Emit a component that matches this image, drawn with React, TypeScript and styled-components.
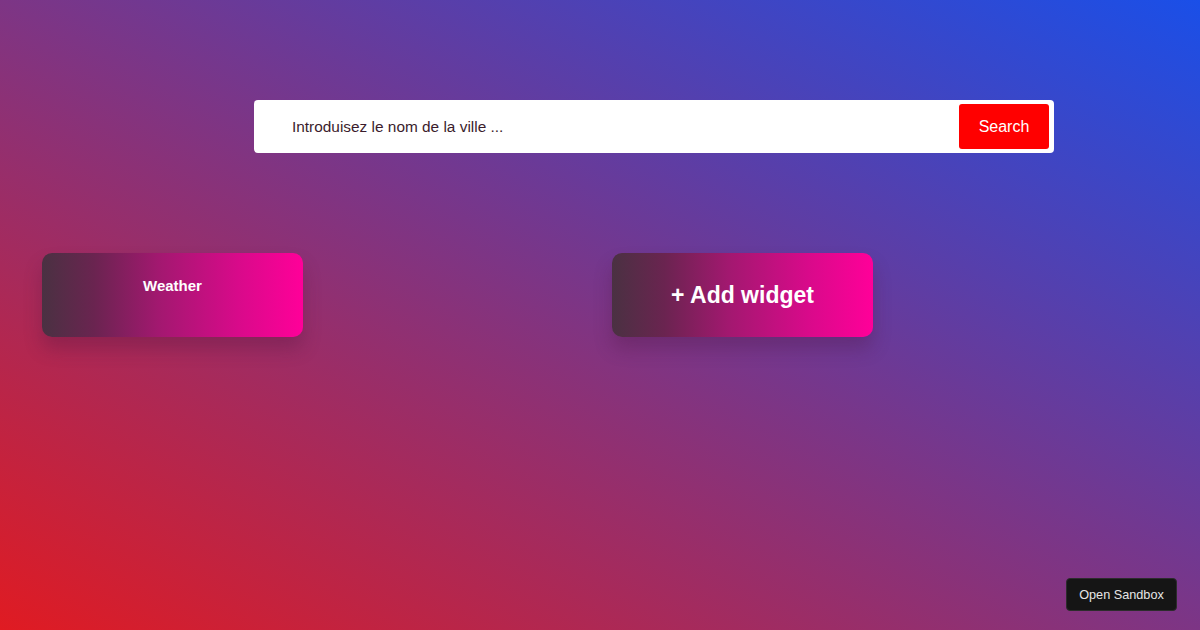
import React from "react";
import styled, { createGlobalStyle } from "styled-components";

const Global = createGlobalStyle`
  html, body { margin: 0; padding: 0; height: 100%; }
  body {
    font-family: "Liberation Sans", Arial, sans-serif;
    background: linear-gradient(to top right, #e01b22 0%, #1a4fe8 100%);
    min-height: 630px;
    overflow: hidden;
  }
`;

const Page = styled.div`
  width: 1200px;
  height: 630px;
  position: relative;
  padding-top: 100px;
  box-sizing: border-box;
`;

const SearchBar = styled.form`
  width: 800px;
  height: 53px;
  margin: 0 0 0 254px;
  background: #fff;
  border-radius: 4px;
  display: flex;
  align-items: center;
  padding: 4px 5px 4px 38px;
  box-sizing: border-box;
`;

const Input = styled.input`
  flex: 1;
  border: none;
  outline: none;
  padding: 0;
  font-family: "Liberation Sans", Arial, sans-serif;
  font-size: 15.4px;
  color: #3b1c2c;
  background: transparent;
  &::placeholder { color: #3b1c2c; }
`;

const SearchButton = styled.button`
  width: 90px;
  height: 45px;
  background: #ff0000;
  color: #fff;
  border: none;
  border-radius: 3px;
  font-family: "Liberation Sans", Arial, sans-serif;
  font-size: 16px;
`;

const Grid = styled.div`
  display: grid;
  grid-template-columns: 570px 570px;
  padding-left: 42px;
  margin-top: 100px;
`;

const Card = styled.div<{ $big?: boolean }>`
  width: 261px;
  height: 84px;
  border-radius: 10px;
  background: linear-gradient(90deg, #4a3142 0%, #6a2450 20%, #a31870 45%, #d80a8a 75%, #ff0099 100%);
  box-shadow: 0 12px 18px rgba(80, 20, 60, 0.3);
  display: flex;
  justify-content: center;
  align-items: ${(p) => (p.$big ? "center" : "flex-start")};
  padding-top: ${(p) => (p.$big ? "0" : "24px")};
  box-sizing: border-box;
  color: #fff;
  font-weight: bold;
  font-size: ${(p) => (p.$big ? "23px" : "15px")};
`;

const SandboxButton = styled.button`
  position: absolute;
  right: 23px;
  bottom: 19px;
  width: 111px;
  height: 33px;
  background: #151515;
  border: 1px solid #2c2c2c;
  border-radius: 4px;
  color: #e6e6e6;
  font-family: "Liberation Sans", Arial, sans-serif;
  font-size: 12.7px;
`;

export default function App() {
  return (
    <>
      <Global />
      <Page>
        <SearchBar onSubmit={(e) => e.preventDefault()}>
          <Input placeholder="Introduisez le nom de la ville ..." />
          <SearchButton>Search</SearchButton>
        </SearchBar>
        <Grid>
          <Card>Weather</Card>
          <Card $big>+ Add widget</Card>
        </Grid>
        <SandboxButton>Open Sandbox</SandboxButton>
      </Page>
    </>
  );
}
